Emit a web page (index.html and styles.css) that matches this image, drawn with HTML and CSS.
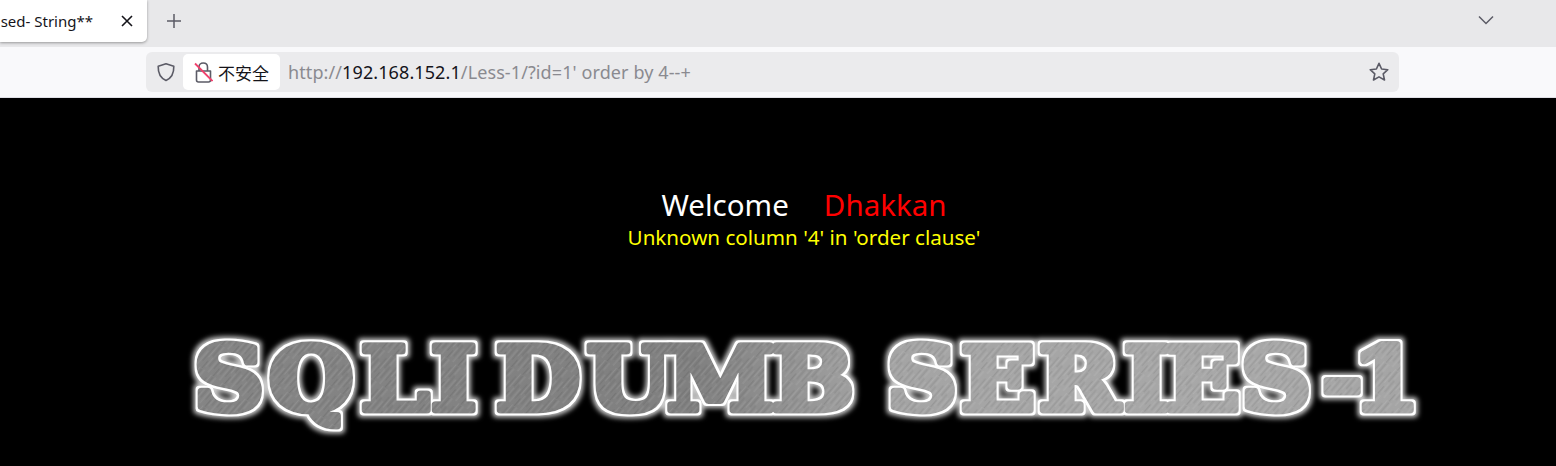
FILE: index.html
```html
<!DOCTYPE html>
<html lang="zh">
<head>
  <meta charset="UTF-8">
  <title>SQLI DUMB SERIES-1</title>
  <link rel="stylesheet" href="styles.css">
</head>
<body>

  <div class="tabbar">
    <div class="tab">
      <span class="tab-title">sed- String**</span>
      <svg class="tab-close" width="12" height="12" viewBox="0 0 12 12"><path d="M1 1L11 11M11 1L1 11"/></svg>
    </div>
    <svg class="tab-new" width="16" height="16" viewBox="0 0 16 16"><path d="M8 1V15M1 8H15"/></svg>
    <svg class="tab-list" width="16" height="10" viewBox="0 0 16 10"><path d="M1 1.5L8 8.5L15 1.5"/></svg>
  </div>

  <div class="navbar">
    <div class="urlbar">
      <svg class="shield" width="20" height="20" viewBox="0 0 20 20"><path d="M10 1.8L2.2 4.2C2 10.5 3.6 15.6 10 18.4C16.4 15.6 18 10.5 17.8 4.2Z"/></svg>
      <div class="notsecure">
        <svg width="20" height="22" viewBox="0 0 20 22">
          <path class="lock" d="M6 10V6C6 3.6 7.8 2 10.2 2S14.5 3.6 14.5 6V10M3.5 10H17.5V19C17.5 20.2 16.7 21 15.5 21H5.5C4.3 21 3.5 20.2 3.5 19Z"/>
          <path class="slash" d="M2 2.5L19.5 20"/>
        </svg>
        <span>不安全</span>
      </div>
      <div class="url">http://<b>192.168.152.1</b>/Less-1/?id=1' order by 4--+</div>
      <svg class="star" width="22" height="22" viewBox="0 0 22 22"><path d="M11 2.3L13.6 8L19.8 8.7L15.2 12.9L16.5 19L11 15.9L5.5 19L6.8 12.9L2.2 8.7L8.4 8Z"/></svg>
    </div>
  </div>

  <div class="page">
    <div class="welcome">Welcome&nbsp;&nbsp;&nbsp;<span class="name">Dhakkan</span></div>
    <div class="error">Unknown column '4' in 'order clause'</div>

    <svg class="logo" width="1300" height="130" viewBox="0 0 1300 130">
      <defs>
        <linearGradient id="metal" gradientUnits="userSpaceOnUse" x1="0" y1="0" x2="1180" y2="0">
          <stop offset="0" stop-color="#858585"/>
          <stop offset="0.42" stop-color="#808080"/>
          <stop offset="0.56" stop-color="#a4a4a4"/>
          <stop offset="0.85" stop-color="#a8a8a8"/>
          <stop offset="1" stop-color="#a4a4a4"/>
        </linearGradient>
        <pattern id="streaks" patternUnits="userSpaceOnUse" width="29" height="13" patternTransform="rotate(-52)">
          <path d="M0 2H17M12 6H29M3 10H14M20 11H29" stroke="#fff" stroke-opacity="0.09" stroke-width="1"/>
          <path d="M6 4H24M0 8H9M15 8.500H28M5 12H19" stroke="#000" stroke-opacity="0.09" stroke-width="1"/>
        </pattern>
        <pattern id="brushed" patternUnits="userSpaceOnUse" width="1300" height="130">
          <rect width="1300" height="130" fill="url(#metal)"/>
          <rect width="1300" height="130" fill="url(#streaks)"/>
        </pattern>
        <filter id="halo" x="-3%" y="-30%" width="106%" height="170%">
          <feMorphology in="SourceAlpha" operator="dilate" radius="1.8" result="thin"/>
          <feMorphology in="SourceAlpha" operator="dilate" radius="4" result="fat"/>
          <feGaussianBlur in="thin" stdDeviation="0.7" result="soft"/>
          <feGaussianBlur in="fat" stdDeviation="2.6" result="wide"/>
          <feFlood flood-color="#fff"/>
          <feComposite in2="soft" operator="in" result="edge"/>
          <feFlood flood-color="#fff" flood-opacity="0.8"/>
          <feComposite in2="wide" operator="in" result="glow"/>
          <feMerge>
            <feMergeNode in="glow"/>
            <feMergeNode in="edge"/>
            <feMergeNode in="SourceGraphic"/>
          </feMerge>
        </filter>
      </defs>
      <g class="logo-glow">
        <text class="logo-text" y="79" x="40 108.200 191.800 255.500 295.500 314.500 397.300 470 565.500 644.500 670 737.300 808.200 885.500 923.600 991.800 1065.500 1093">SQLI DUMB SERIES-1</text>
      </g>
    </svg>
  </div>

</body>
</html>
```

FILE: styles.css
```css
html, body {
  margin: 0;
  height: 466px;
  overflow: hidden;
  background: #000;
}

body {
  font-family: 'Noto Sans', sans-serif;
}

svg {
  display: block;
  fill: none;
  flex: none;
}

.tabbar {
  display: flex;
  align-items: flex-start;
  height: 47px;
  background: #e8e8ea;
  position: relative;
}

.tab {
  display: flex;
  align-items: center;
  justify-content: flex-end;
  width: 147px;
  height: 42px;
  padding-right: 14px;
  box-sizing: border-box;
  background: #fff;
  border-radius: 0 0 5px 0;
  box-shadow: 0 1px 3px rgba(0,0,0,0.35);
  overflow: hidden;
  color: #15141a;
  font-size: 15px;
}

.tab-title {
  margin-right: 28px;
  white-space: nowrap;
}

.tab-close path {
  stroke: #15141a;
  stroke-width: 1.6;
}

.tab-new {
  margin: 13px 0 0 19px;
}

.tab-new path {
  stroke: #5b5b66;
  stroke-width: 1.5;
}

.tab-list {
  margin: 15px 0 0 auto;
  position: relative;
  left: -62px;
}

.tab-list path {
  stroke: #5b5b66;
  stroke-width: 1.5;
}

.navbar {
  display: flex;
  align-items: center;
  height: 50px;
  padding-left: 146px;
  background: #f9f9fb;
  border-bottom: 1px solid #e0e0e6;
}

.urlbar {
  display: flex;
  align-items: center;
  width: 1253px;
  height: 40px;
  background: #ebebed;
  border-radius: 6px;
}

.shield {
  margin-left: 10px;
}

.shield path {
  stroke: #5b5b66;
  stroke-width: 1.6;
  stroke-linejoin: round;
}

.notsecure {
  display: flex;
  align-items: center;
  gap: 5px;
  width: 97px;
  height: 36px;
  margin-left: 7px;
  padding-left: 10px;
  box-sizing: border-box;
  background: #fff;
  border-radius: 5px;
  color: #15141a;
  font-family: 'Noto Sans CJK SC', sans-serif;
  font-size: 17px;
}

.lock {
  stroke: #5b5b66;
  stroke-width: 1.6;
  stroke-linejoin: round;
}

.slash {
  stroke: #f0406c;
  stroke-width: 1.8;
}

.url {
  margin-left: 8px;
  color: #8a8a90;
  font-size: 18px;
  letter-spacing: 0.1px;
  white-space: nowrap;
}

.url b {
  font-weight: normal;
  color: #15141a;
}

.star {
  margin-left: auto;
  margin-right: 9px;
}

.star path {
  stroke: #5b5b66;
  stroke-width: 1.6;
  stroke-linejoin: round;
}

.page {
  padding: 87px 0 0 52px;
  text-align: center;
  background: #000;
}

.welcome {
  color: #fff;
  font-size: 29.500px;
  line-height: 40px;
}

.name {
  color: #f00;
  margin-left: 12px;
}

.error {
  color: #ff0;
  font-size: 20.6px;
  line-height: 25px;
}

.logo {
  margin: 81px 0 0 98px;
}

.logo-glow {
  filter: url(#halo);
}

.logo-text {
  font-family: 'DejaVu Serif', serif;
  font-weight: bold;
  font-size: 88px;
  fill: url(#brushed);
  stroke: url(#brushed);
  stroke-width: 7;
  stroke-linejoin: round;
  transform: scaleX(1.1);
}
```
